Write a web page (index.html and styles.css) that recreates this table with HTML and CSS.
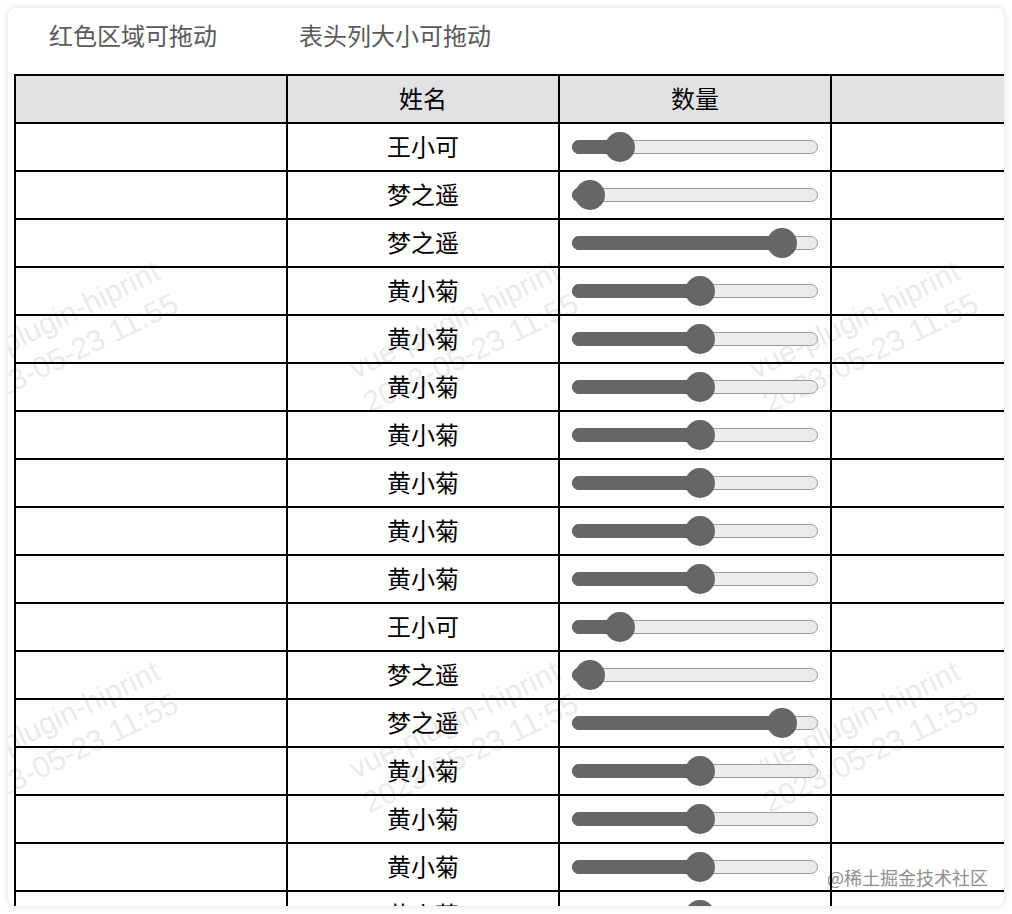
FILE: index.html
```html
<!DOCTYPE html>
<html lang="zh">
<head>
<meta charset="utf-8">
<title>表格拖动</title>
<link rel="stylesheet" href="styles.css">
</head>
<body>
<div class="card">
  <div class="toolbar">
    <span class="tool">红色区域可拖动</span>
    <span class="tool">表头列大小可拖动</span>
  </div>
  <div class="table-area">
    <div class="watermark">
      <div class="wm-tile"><div class="wm-text"><div>vue-plugin-hiprint</div><div>2023-05-23 11:55</div></div></div>
      <div class="wm-tile"><div class="wm-text"><div>vue-plugin-hiprint</div><div>2023-05-23 11:55</div></div></div>
      <div class="wm-tile"><div class="wm-text"><div>vue-plugin-hiprint</div><div>2023-05-23 11:55</div></div></div>
      <div class="wm-tile"><div class="wm-text"><div>vue-plugin-hiprint</div><div>2023-05-23 11:55</div></div></div>
      <div class="wm-tile"><div class="wm-text"><div>vue-plugin-hiprint</div><div>2023-05-23 11:55</div></div></div>
      <div class="wm-tile"><div class="wm-text"><div>vue-plugin-hiprint</div><div>2023-05-23 11:55</div></div></div>
    </div>
    <table class="grid">
      <thead>
        <tr><th></th><th>姓名</th><th>数量</th><th></th></tr>
      </thead>
      <tbody>
        <tr><td></td><td>王小可</td><td><div class="slider" style="--v:0.15"><div class="fill"></div><div class="thumb"></div></div></td><td></td></tr>
        <tr><td></td><td>梦之遥</td><td><div class="slider" style="--v:0.01"><div class="fill"></div><div class="thumb"></div></div></td><td></td></tr>
        <tr><td></td><td>梦之遥</td><td><div class="slider" style="--v:0.905"><div class="fill"></div><div class="thumb"></div></div></td><td></td></tr>
        <tr><td></td><td>黄小菊</td><td><div class="slider" style="--v:0.523"><div class="fill"></div><div class="thumb"></div></div></td><td></td></tr>
        <tr><td></td><td>黄小菊</td><td><div class="slider" style="--v:0.523"><div class="fill"></div><div class="thumb"></div></div></td><td></td></tr>
        <tr><td></td><td>黄小菊</td><td><div class="slider" style="--v:0.523"><div class="fill"></div><div class="thumb"></div></div></td><td></td></tr>
        <tr><td></td><td>黄小菊</td><td><div class="slider" style="--v:0.523"><div class="fill"></div><div class="thumb"></div></div></td><td></td></tr>
        <tr><td></td><td>黄小菊</td><td><div class="slider" style="--v:0.523"><div class="fill"></div><div class="thumb"></div></div></td><td></td></tr>
        <tr><td></td><td>黄小菊</td><td><div class="slider" style="--v:0.523"><div class="fill"></div><div class="thumb"></div></div></td><td></td></tr>
        <tr><td></td><td>黄小菊</td><td><div class="slider" style="--v:0.523"><div class="fill"></div><div class="thumb"></div></div></td><td></td></tr>
        <tr><td></td><td>王小可</td><td><div class="slider" style="--v:0.15"><div class="fill"></div><div class="thumb"></div></div></td><td></td></tr>
        <tr><td></td><td>梦之遥</td><td><div class="slider" style="--v:0.01"><div class="fill"></div><div class="thumb"></div></div></td><td></td></tr>
        <tr><td></td><td>梦之遥</td><td><div class="slider" style="--v:0.905"><div class="fill"></div><div class="thumb"></div></div></td><td></td></tr>
        <tr><td></td><td>黄小菊</td><td><div class="slider" style="--v:0.523"><div class="fill"></div><div class="thumb"></div></div></td><td></td></tr>
        <tr><td></td><td>黄小菊</td><td><div class="slider" style="--v:0.523"><div class="fill"></div><div class="thumb"></div></div></td><td></td></tr>
        <tr><td></td><td>黄小菊</td><td><div class="slider" style="--v:0.523"><div class="fill"></div><div class="thumb"></div></div></td><td></td></tr>
        <tr><td></td><td>黄小菊</td><td><div class="slider" style="--v:0.523"><div class="fill"></div><div class="thumb"></div></div></td><td></td></tr>
      </tbody>
    </table>
  </div>
</div>
<div class="site-mark">@稀土掘金技术社区</div>
</body>
</html>
```
FILE: styles.css
```css
html, body {
  margin: 0;
  padding: 0;
  background: #ffffff;
}

body {
  width: 1012px;
  height: 914px;
  position: relative;
  overflow: hidden;
  font-family: "Noto Sans CJK SC", "Liberation Sans", sans-serif;
}

.card {
  position: relative;
  margin: 8px 0 0 8px;
  width: 996px;
  height: 898px;
  background: #fff;
  border-radius: 8px;
  box-shadow: 0 0 7px rgba(0, 0, 0, 0.14);
  overflow: hidden;
}

.toolbar {
  display: flex;
  gap: 82px;
  height: 66px;
  box-sizing: border-box;
  padding: 15px 0 0 41px;
}

.tool {
  font-size: 24px;
  line-height: 24px;
  color: #5a5a5a;
  white-space: nowrap;
}

.table-area {
  position: relative;
  padding-left: 6px;
}

.watermark {
  position: absolute;
  left: -146px;
  top: 62px;
  display: grid;
  grid-template-columns: repeat(3, 400px);
  grid-auto-rows: 400px;
  z-index: 0;
  pointer-events: none;
}

.wm-tile {
  display: flex;
  align-items: center;
  justify-content: center;
}

.wm-text {
  transform: rotate(-26deg);
  font-family: "Liberation Sans", Arial, sans-serif;
  font-size: 30px;
  line-height: 37px;
  color: rgba(160, 160, 160, 0.24);
  text-align: center;
  white-space: nowrap;
}

.grid {
  position: relative;
  z-index: 1;
  border-collapse: separate;
  border-spacing: 0;
  table-layout: fixed;
  width: 1090px;
  border-top: 2px solid #000;
  border-left: 2px solid #000;
}

.grid th,
.grid td {
  width: 270px;
  height: 46px;
  padding: 0 0 2px;
  box-sizing: content-box;
  border-right: 2px solid #000;
  border-bottom: 2px solid #000;
  text-align: center;
  vertical-align: middle;
  font-size: 24px;
  line-height: 24px;
  font-weight: 400;
  color: #000;
}

.grid th,
.grid td {
  height: 44px;
}

.grid th {
  background: #e2e2e2;
}

.slider {
  position: relative;
  margin: 2px 12px 0;
  height: 14px;
  box-sizing: border-box;
  border: 1px solid #9c9c9c;
  border-radius: 8px;
  background: #ececec;
}

.fill {
  position: absolute;
  left: -1px;
  top: -1px;
  bottom: -1px;
  width: calc(var(--v) * (100% - 30px) + 16px);
  background: #666;
  border-radius: 8px 0 0 8px;
}

.thumb {
  position: absolute;
  top: 50%;
  left: calc(var(--v) * (100% - 30px));
  width: 30px;
  height: 30px;
  margin-top: -15px;
  border-radius: 50%;
  background: #666;
}

.site-mark {
  position: absolute;
  left: 827px;
  top: 866px;
  font-size: 18px;
  line-height: 22px;
  color: #8e8e8e;
  text-shadow: 0 0 2px #fff, 0 0 1px #fff;
  white-space: nowrap;
  pointer-events: none;
}
```
